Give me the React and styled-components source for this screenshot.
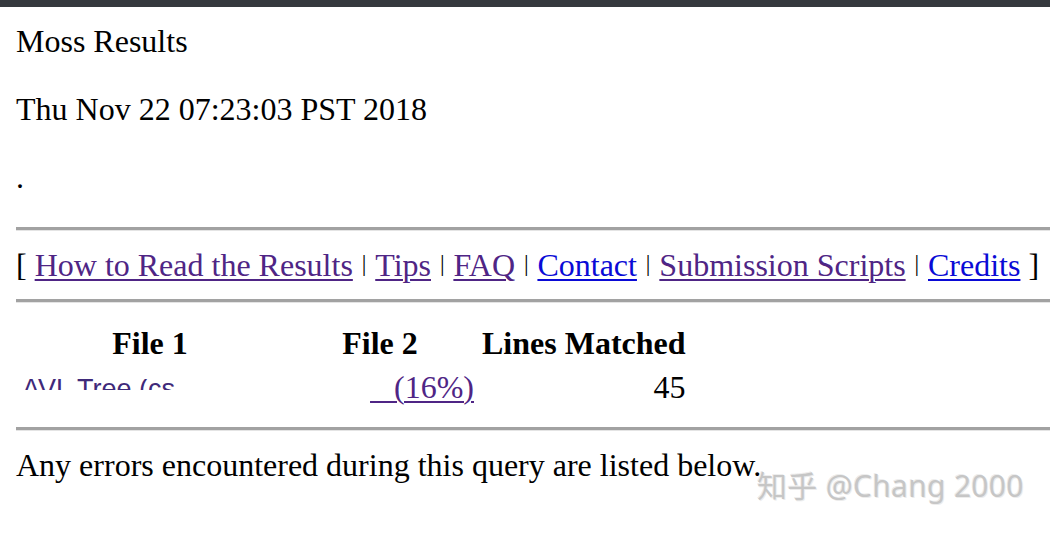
import React from "react";
import styled, { createGlobalStyle } from "styled-components";

const GlobalStyle = createGlobalStyle`
  html, body {
    margin: 0;
    padding: 0;
    background: #fff;
  }
  body {
    font-family: "Liberation Serif", "Times New Roman", serif;
    font-size: 32px;
    line-height: 36px;
    color: #000;
  }
`;

const Screen = styled.div`
  position: relative;
  width: 1050px;
  height: 534px;
  overflow: hidden;
`;

const TopBar = styled.div`
  height: 7px;
  background: #35393e;
`;

const Page = styled.div`
  padding: 16px 0 0 16px;
`;

const Title = styled.div``;

const Para = styled.p`
  margin: 32px 0;
`;

const Rule = styled.hr`
  margin: 16px 0;
  height: 0;
  border: 0;
  border-top: 3px solid #a2a2a2;
  border-bottom: 1px solid #e4e4e4;
`;

const Nav = styled.div`
  white-space: nowrap;
`;

const Link = styled.a`
  color: ${(p) => (p.$visited ? "#4f2585" : "#0a0ad6")};
  text-decoration: underline;
  text-decoration-thickness: 2px;
  text-underline-offset: 3px;
`;

const Sep = styled.span`
  font-size: 23px;
  line-height: 1;
  vertical-align: 5px;
  padding: 0 8.9px;
`;

const Table = styled.table`
  border-collapse: separate;
  border-spacing: 4px;
  margin: 0;
  font-size: 32px;
  line-height: 36px;
`;

const Head = styled.th`
  padding: 2px;
  font-weight: bold;
  text-align: center;
  width: ${(p) => p.$w || "auto"};
`;

const Cell = styled.td`
  padding: 2px;
  text-align: ${(p) => p.$align || "left"};
  white-space: nowrap;
`;

const Smudge = styled.span`
  display: inline-block;
  height: 11px;
  overflow: hidden;
  vertical-align: 8px;
  line-height: 20px;
  font-family: "Liberation Sans", Arial, sans-serif;
  font-size: 27px;
  color: #3f2a7a;
`;

const Watermark = styled.div`
  position: absolute;
  left: 757px;
  top: 468px;
  font-family: "Noto Sans", "Noto Sans CJK SC", sans-serif;
  font-size: 30px;
  line-height: 36px;
  letter-spacing: 0.3px;
  color: #c6c6c6;
  text-shadow: 1px 1px 0 #ececec, -1px -1px 0 rgba(120, 120, 120, 0.15);
  white-space: nowrap;
`;

const navItems = [
  { label: "How to Read the Results", visited: true },
  { label: "Tips", visited: true },
  { label: "FAQ", visited: true },
  { label: "Contact", visited: false },
  { label: "Submission Scripts", visited: true },
  { label: "Credits", visited: false },
];

export default function App() {
  return (
    <Screen>
      <GlobalStyle />
      <TopBar />
      <Page>
        <Title>Moss Results</Title>
        <Para>Thu Nov 22 07:23:03 PST 2018</Para>
        <Para>.</Para>
        <Rule />
        <Nav>
          [{" "}
          {navItems.map((item, i) => (
            <React.Fragment key={item.label}>
              {i > 0 && <Sep>|</Sep>}
              <Link href="#" $visited={item.visited}>
                {item.label}
              </Link>
            </React.Fragment>
          ))}{" "}
          ]
        </Nav>
        <Rule />
        <Table>
          <thead>
            <tr>
              <Head $w="256px">File 1</Head>
              <Head $w="188px">File 2</Head>
              <Head>Lines Matched</Head>
            </tr>
          </thead>
          <tbody>
            <tr>
              <Cell>
                <Smudge>AVL Tree (cs...</Smudge>
              </Cell>
              <Cell $align="right">
                <Link href="#" $visited>
                  {"\u00a0\u00a0\u00a0(16%)"}
                </Link>
              </Cell>
              <Cell $align="right">45</Cell>
            </tr>
          </tbody>
        </Table>
        <Rule />
        <div>Any errors encountered during this query are listed below.</div>
      </Page>
      <Watermark>知乎 @Chang 2000</Watermark>
    </Screen>
  );
}
